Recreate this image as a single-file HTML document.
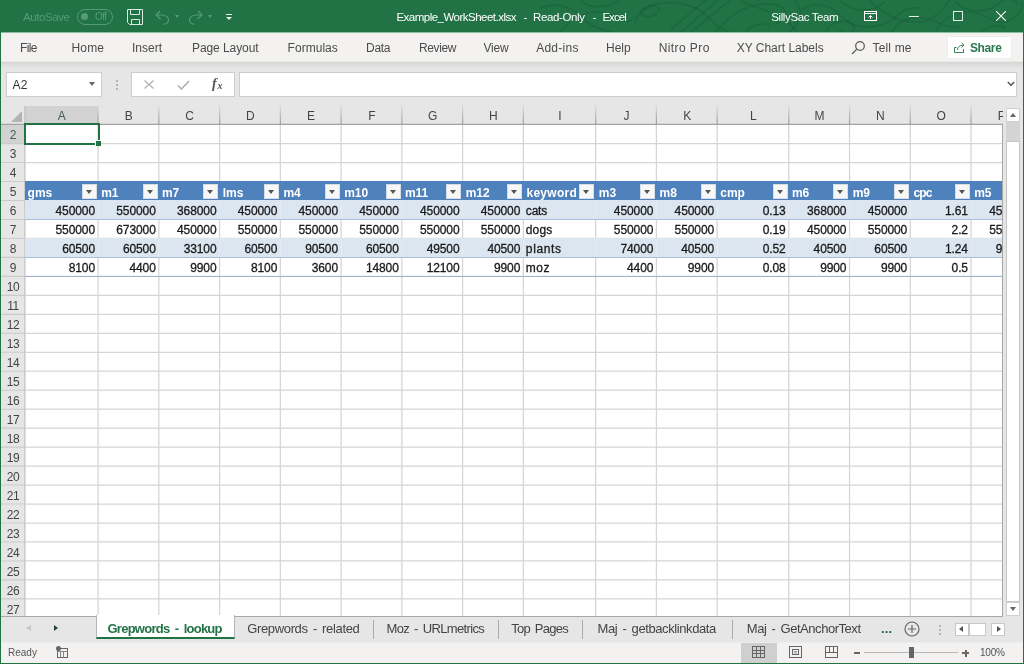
<!DOCTYPE html>
<html><head><meta charset="utf-8"><title>Example_WorkSheet.xlsx - Read-Only - Excel</title>
<style>
html,body{margin:0;padding:0;}
body{width:1024px;height:664px;overflow:hidden;position:relative;background:#e6e6e6;font-family:"Liberation Sans",sans-serif;font-size:12px;color:#444;}
#root{left:0;top:0;width:1024px;height:664px;will-change:transform;}
div,span,svg,i{position:absolute;box-sizing:border-box;white-space:nowrap;}
#title{left:0;top:0;width:1024px;height:32px;background:#217346;}
#tabs{left:1px;top:32px;width:1022px;height:30px;background:#f3f2f1;border-top:1px solid #8fbba2;border-bottom:1px solid #e9e8e7;box-shadow:inset 0 1px 0 #e9f3ec;}
#fbar{left:1px;top:62px;width:1022px;height:44px;background:#e6e6e6;}
.wbox{background:#fff;border:1px solid #cdcdcd;}
#grid{left:1px;top:106px;width:1002px;height:510px;background:#fff;overflow:hidden;}
.vl{width:1px;background:#d9d9d9;}
.hl{height:1px;background:#d9d9d9;}
.fb{width:15px;height:15px;background:#f7f7f7;border:1px solid #d5dde8;}
.fb i{left:3px;top:5px;width:0;height:0;border-left:3.5px solid transparent;border-right:3.5px solid transparent;border-top:4px solid #555;}
#sheets{left:1px;top:616px;width:1022px;height:26px;background:#e6e6e6;}
#status{left:1px;top:642px;width:1022px;height:21px;background:#f3f2f1;}
#frame{left:0;top:0;width:1024px;height:664px;border:1px solid #217346;border-top:none;border-right-width:1.6px;border-bottom-width:1.4px;pointer-events:none;}
</style></head><body><div id="root">

<div id="title">
<span style="left:23.00px;top:9.52px;font-size:11.5px;line-height:14px;color:#569a77;letter-spacing:-0.410px;">AutoSave</span>
<div style="left:77px;top:9px;width:36px;height:16px;border:1px solid #569a77;border-radius:8px;"></div>
<div style="left:81px;top:13px;width:7px;height:7px;border-radius:4px;background:#569a77;"></div>
<span style="left:95.00px;top:10.54px;font-size:10px;line-height:12px;color:#569a77;letter-spacing:-0.577px;">Off</span>
<svg style="left:127px;top:9px" width="16" height="16" viewBox="0 0 16 16" fill="none" stroke="#d8ebe0" stroke-width="1"><path d="M0.5 0.5h15v15h-13l-2-2z"/><path d="M3.5 0.5v5h9v-5"/><path d="M4.5 15.5v-5h8v5"/></svg>
<svg style="left:155px;top:10px" width="15" height="15" viewBox="0 0 15 15" fill="none" stroke="#569a77" stroke-width="1.2"><path d="M5 1 L1 5 L5.5 9"/><path d="M1 5 H7 C11 5 14 7.5 13.5 10.5 C13 13 11 14.2 8.5 14.2"/></svg>
<div style="left:174.5px;top:15px;width:0;height:0;border-left:2.8px solid transparent;border-right:2.8px solid transparent;border-top:3px solid #569a77;"></div>
<svg style="left:188px;top:10px" width="15" height="15" viewBox="0 0 15 15" fill="none" stroke="#569a77" stroke-width="1.2"><path d="M10 1 L14 5 L9.5 9"/><path d="M14 5 H8 C4 5 1 7.5 1.5 10.5 C2 13 4 14.2 6.5 14.2"/></svg>
<div style="left:207.5px;top:15px;width:0;height:0;border-left:2.8px solid transparent;border-right:2.8px solid transparent;border-top:3px solid #569a77;"></div>
<div style="left:225.5px;top:14px;width:6px;height:1px;background:#e8f3ec;"></div>
<div style="left:225.5px;top:16.5px;width:0;height:0;border-left:3px solid transparent;border-right:3px solid transparent;border-top:3.5px solid #e8f3ec;"></div>
<svg style="left:540px;top:0" width="484" height="33" viewBox="0 0 484 33" fill="none" stroke="#124d2c" stroke-opacity="0.26" stroke-width="1.7"><ellipse cx="110" cy="11" rx="9" ry="5" transform="rotate(-15 110 11)"/><path d="M95 22C100 5 125 -2 150 6S170 30 195 33"/><path d="M130 30L168 -2M140 33L180 -2M150 33L190 0"/><path d="M175 33C185 20 200 5 225 4S250 20 235 24"/><path d="M200 0C215 10 230 8 245 20S255 33 262 33"/><path d="M262 10C275 0 290 5 300 15S320 30 340 25S360 5 380 8"/><path d="M330 0C340 12 352 20 372 22S400 12 410 0"/><path d="M395 33C400 20 415 10 432 12S455 28 470 20S480 5 484 2"/><path d="M20 33C30 20 45 10 60 12S80 25 92 20"/><path d="M40 0C50 10 70 8 80 0"/><path d="M285 33C290 22 305 18 312 24S310 36 300 30"/><path d="M300 0C312 14 335 12 345 2"/><path d="M352 33C356 22 370 16 384 18S405 30 420 26"/><path d="M415 2C425 12 445 14 455 6S470 -4 478 4"/><path d="M440 33C446 26 458 24 466 28"/><path d="M0 8C15 2 30 6 40 16S60 30 75 33"/><path d="M205 33C212 24 222 22 230 26"/><path d="M255 0C262 8 262 18 255 26S250 33 252 33"/></svg>
<span style="left:396.40px;top:9.72px;font-size:11.5px;line-height:14px;color:#fff;letter-spacing:-0.510px;">Example_WorkSheet.xlsx</span>
<span style="left:523.50px;top:9.72px;font-size:11.5px;line-height:14px;color:#fff;letter-spacing:0.000px;">-</span>
<span style="left:533.00px;top:9.72px;font-size:11.5px;line-height:14px;color:#fff;letter-spacing:-0.371px;">Read-Only</span>
<span style="left:592.50px;top:9.72px;font-size:11.5px;line-height:14px;color:#fff;letter-spacing:0.000px;">-</span>
<span style="left:602.40px;top:9.72px;font-size:11.5px;line-height:14px;color:#fff;letter-spacing:-0.955px;">Excel</span>
<span style="left:771.20px;top:9.72px;font-size:11.5px;line-height:14px;color:#fff;letter-spacing:-0.376px;">SillySac Team</span>
<svg style="left:864px;top:11px" width="13" height="10" viewBox="0 0 13 10" fill="none" stroke="#fff" stroke-width="1"><rect x="0.5" y="0.5" width="12" height="9"/><path d="M0.5 2.5h12"/><path d="M6.5 8V4.5M4.5 6.5l2-2 2 2"/></svg>
<div style="left:909px;top:16px;width:10px;height:1px;background:#e4f0e9;"></div>
<div style="left:953px;top:11px;width:10px;height:10px;border:1px solid #e4f0e9;"></div>
<svg style="left:996px;top:11px" width="10" height="10" viewBox="0 0 10 10" stroke="#fff" stroke-width="1.1"><path d="M0 0L10 10M10 0L0 10"/></svg>
</div>
<div id="tabs"></div><div id="tabsc" style="left:0;top:0;">
<span style="left:20.00px;top:40.84px;font-size:12px;line-height:14px;color:#4c4c4c;letter-spacing:-0.612px;">File</span>
<span style="left:71.50px;top:40.84px;font-size:12px;line-height:14px;color:#4c4c4c;letter-spacing:0.163px;">Home</span>
<span style="left:132.00px;top:40.84px;font-size:12px;line-height:14px;color:#4c4c4c;letter-spacing:-0.002px;">Insert</span>
<span style="left:192.00px;top:40.84px;font-size:12px;line-height:14px;color:#4c4c4c;letter-spacing:-0.079px;">Page Layout</span>
<span style="left:287.60px;top:40.84px;font-size:12px;line-height:14px;color:#4c4c4c;letter-spacing:0.027px;">Formulas</span>
<span style="left:366.00px;top:40.84px;font-size:12px;line-height:14px;color:#4c4c4c;letter-spacing:-0.283px;">Data</span>
<span style="left:419.00px;top:40.84px;font-size:12px;line-height:14px;color:#4c4c4c;letter-spacing:-0.369px;">Review</span>
<span style="left:483.40px;top:40.84px;font-size:12px;line-height:14px;color:#4c4c4c;letter-spacing:-0.131px;">View</span>
<span style="left:536.20px;top:40.84px;font-size:12px;line-height:14px;color:#4c4c4c;letter-spacing:0.252px;">Add-ins</span>
<span style="left:606.00px;top:40.84px;font-size:12px;line-height:14px;color:#4c4c4c;letter-spacing:0.006px;">Help</span>
<span style="left:658.70px;top:40.84px;font-size:12px;line-height:14px;color:#4c4c4c;letter-spacing:0.419px;">Nitro Pro</span>
<span style="left:736.70px;top:40.84px;font-size:12px;line-height:14px;color:#4c4c4c;letter-spacing:-0.012px;">XY Chart Labels</span>
<span style="left:872.50px;top:40.84px;font-size:12px;line-height:14px;color:#4c4c4c;letter-spacing:0.165px;">Tell me</span>
<svg style="left:851px;top:40px" width="15" height="15" viewBox="0 0 15 15" fill="none" stroke="#555" stroke-width="1.2"><circle cx="9" cy="6" r="4.3"/><path d="M5.8 9.2L1 14"/></svg>
<div style="left:948px;top:37px;width:63px;height:21px;background:#fff;box-shadow:0 0 1px #ddd;"></div>
<svg style="left:954px;top:42px" width="12" height="12" viewBox="0 0 12 12" fill="none" stroke="#3d7d5b" stroke-width="1"><path d="M2.5 5.5H0.5v5h9V7"/><path d="M3.5 8C3.8 5 5.5 3.2 9.5 3.2M7.5 0.8l2.5 2.4-2.5 2.4"/></svg>
<span style="left:970.00px;top:40.84px;font-size:12px;line-height:14px;color:#2a7950;letter-spacing:-0.388px;font-weight:bold;">Share</span>
</div>
<div id="fbar"></div><div style="left:0;top:0;">
<div style="left:1px;top:62px;width:1022px;height:6px;background:linear-gradient(#d5d5d4,#e6e6e6);"></div>
<div class="wbox" style="left:6px;top:72.4px;width:96px;height:24.5px;"></div>
<span style="left:12.50px;top:77.64px;font-size:12px;line-height:14px;color:#333;letter-spacing:0.322px;">A2</span>
<div style="left:89px;top:81.5px;width:0;height:0;border-left:3.5px solid transparent;border-right:3.5px solid transparent;border-top:4px solid #666;"></div>
<div style="left:115.5px;top:80px;width:2px;height:1.6px;background:#b4b4b4;"></div>
<div style="left:115.5px;top:84px;width:2px;height:1.6px;background:#b4b4b4;"></div>
<div style="left:115.5px;top:88px;width:2px;height:1.6px;background:#b4b4b4;"></div>
<div class="wbox" style="left:131px;top:72.4px;width:104px;height:24.5px;"></div>
<svg style="left:144px;top:80px" width="10" height="9" viewBox="0 0 10 9" stroke="#b0b0b0" stroke-width="1.2"><path d="M0.5 0.5L9.5 8.5M9.5 0.5L0.5 8.5"/></svg>
<svg style="left:177px;top:80px" width="13" height="10" viewBox="0 0 13 10" fill="none" stroke="#b0b0b0" stroke-width="1.6"><path d="M1 5.5L4.5 9L12 1"/></svg>
<span style="left:212px;top:76px;font-family:'Liberation Serif',serif;font-style:italic;font-weight:bold;font-size:14px;line-height:16px;color:#555;">f</span>
<span style="left:217.5px;top:80px;font-family:'Liberation Serif',serif;font-style:italic;font-weight:bold;font-size:10px;line-height:12px;color:#555;">x</span>
<div class="wbox" style="left:239px;top:72.4px;width:778px;height:24.5px;"></div>
<svg style="left:1006.5px;top:81px" width="8" height="6" viewBox="0 0 8 6" fill="none" stroke="#606060" stroke-width="1.7"><path d="M0.8 1L4 4.3L7.2 1"/></svg>
</div>
<div id="gridc" style="left:0;top:0;width:1003px;height:616px;overflow:hidden;">
<div style="left:1px;top:106px;width:1002px;height:19px;background:#e6e6e6;"></div>
<div style="left:1px;top:125px;width:24px;height:500px;background:#e6e6e6;"></div>
<div style="left:25px;top:125px;width:980px;height:500px;background:#fff;"></div>
<div style="left:25px;top:106px;width:73px;height:18px;background:#d2d2d2;"></div>
<div style="left:1px;top:125px;width:23px;height:18px;background:#d2d2d2;"></div>
<div style="left:11px;top:111px;width:0;height:0;border-left:11px solid transparent;border-bottom:11px solid #b4b4b4;"></div>
<svg style="left:0;top:0" width="1003" height="616" viewBox="0 0 1003 616" fill="none"><defs><linearGradient id="hg" gradientUnits="userSpaceOnUse" x1="0" y1="104" x2="0" y2="124"><stop offset="0" stop-color="#e2e2e2"/><stop offset="1" stop-color="#9c9c9c"/></linearGradient></defs><path d="M98.10 125V616 M158.85 125V616 M219.60 125V616 M280.35 125V616 M341.10 125V616 M401.85 125V616 M462.60 125V616 M523.35 125V616 M595.65 125V616 M656.40 125V616 M717.15 125V616 M788.80 125V616 M849.55 125V616 M910.30 125V616 M971.05 125V616 M1031.80 125V616 M25.5 143.60H1003 M25.5 162.57H1003 M25.5 181.54H1003 M25.5 200.51H1003 M25.5 219.48H1003 M25.5 238.45H1003 M25.5 257.42H1003 M25.5 276.39H1003 M25.5 295.36H1003 M25.5 314.33H1003 M25.5 333.30H1003 M25.5 352.27H1003 M25.5 371.24H1003 M25.5 390.21H1003 M25.5 409.18H1003 M25.5 428.15H1003 M25.5 447.12H1003 M25.5 466.09H1003 M25.5 485.06H1003 M25.5 504.03H1003 M25.5 523.00H1003 M25.5 541.97H1003 M25.5 560.94H1003 M25.5 579.91H1003 M25.5 598.88H1003 M25.5 617.85H1003" stroke="#d5d5d5" stroke-width="1.25"/><path d="M1 143.60H24.5 M1 162.57H24.5 M1 181.54H24.5 M1 200.51H24.5 M1 219.48H24.5 M1 238.45H24.5 M1 257.42H24.5 M1 276.39H24.5 M1 295.36H24.5 M1 314.33H24.5 M1 333.30H24.5 M1 352.27H24.5 M1 371.24H24.5 M1 390.21H24.5 M1 409.18H24.5 M1 428.15H24.5 M1 447.12H24.5 M1 466.09H24.5 M1 485.06H24.5 M1 504.03H24.5 M1 523.00H24.5 M1 541.97H24.5 M1 560.94H24.5 M1 579.91H24.5 M1 598.88H24.5 M1 617.85H24.5" stroke="#cbcbcb" stroke-width="1.1"/><path d="M98.10 105V124.3 M158.85 105V124.3 M219.60 105V124.3 M280.35 105V124.3 M341.10 105V124.3 M401.85 105V124.3 M462.60 105V124.3 M523.35 105V124.3 M595.65 105V124.3 M656.40 105V124.3 M717.15 105V124.3 M788.80 105V124.3 M849.55 105V124.3 M910.30 105V124.3 M971.05 105V124.3 M1031.80 105V124.3" stroke="url(#hg)" stroke-width="1.2"/><path d="M1 124.35H1003" stroke="#a3a3a3" stroke-width="1.1"/><path d="M24.9 106V616" stroke="#bdbdbd" stroke-width="1.1"/></svg>
<span style="left:57.70px;top:109.14px;font-size:12px;line-height:14px;color:#40614f;letter-spacing:0.000px;">A</span>
<span style="left:124.87px;top:109.14px;font-size:12px;line-height:14px;color:#444;letter-spacing:0.000px;">B</span>
<span style="left:185.29px;top:109.14px;font-size:12px;line-height:14px;color:#444;letter-spacing:0.000px;">C</span>
<span style="left:246.04px;top:109.14px;font-size:12px;line-height:14px;color:#444;letter-spacing:0.000px;">D</span>
<span style="left:307.12px;top:109.14px;font-size:12px;line-height:14px;color:#444;letter-spacing:0.000px;">E</span>
<span style="left:368.21px;top:109.14px;font-size:12px;line-height:14px;color:#444;letter-spacing:0.000px;">F</span>
<span style="left:427.96px;top:109.14px;font-size:12px;line-height:14px;color:#444;letter-spacing:0.000px;">G</span>
<span style="left:489.04px;top:109.14px;font-size:12px;line-height:14px;color:#444;letter-spacing:0.000px;">H</span>
<span style="left:558.23px;top:109.14px;font-size:12px;line-height:14px;color:#444;letter-spacing:0.000px;">I</span>
<span style="left:623.42px;top:109.14px;font-size:12px;line-height:14px;color:#444;letter-spacing:0.000px;">J</span>
<span style="left:683.17px;top:109.14px;font-size:12px;line-height:14px;color:#444;letter-spacing:0.000px;">K</span>
<span style="left:750.04px;top:109.14px;font-size:12px;line-height:14px;color:#444;letter-spacing:0.000px;">L</span>
<span style="left:814.58px;top:109.14px;font-size:12px;line-height:14px;color:#444;letter-spacing:0.000px;">M</span>
<span style="left:875.99px;top:109.14px;font-size:12px;line-height:14px;color:#444;letter-spacing:0.000px;">N</span>
<span style="left:936.41px;top:109.14px;font-size:12px;line-height:14px;color:#444;letter-spacing:0.000px;">O</span>
<span style="left:997.82px;top:109.14px;font-size:12px;line-height:14px;color:#444;letter-spacing:0.000px;">P</span>
<span style="left:9.86px;top:128.37px;font-size:12px;line-height:14px;color:#40614f;letter-spacing:-0.000px;">2</span>
<span style="left:9.86px;top:147.34px;font-size:12px;line-height:14px;color:#444;letter-spacing:-0.000px;">3</span>
<span style="left:9.86px;top:166.31px;font-size:12px;line-height:14px;color:#444;letter-spacing:-0.000px;">4</span>
<span style="left:9.86px;top:185.28px;font-size:12px;line-height:14px;color:#444;letter-spacing:-0.000px;">5</span>
<span style="left:9.86px;top:204.25px;font-size:12px;line-height:14px;color:#444;letter-spacing:-0.000px;">6</span>
<span style="left:9.86px;top:223.22px;font-size:12px;line-height:14px;color:#444;letter-spacing:-0.000px;">7</span>
<span style="left:9.86px;top:242.19px;font-size:12px;line-height:14px;color:#444;letter-spacing:-0.000px;">8</span>
<span style="left:9.86px;top:261.16px;font-size:12px;line-height:14px;color:#444;letter-spacing:-0.000px;">9</span>
<span style="left:6.78px;top:280.13px;font-size:12px;line-height:14px;color:#444;letter-spacing:-0.500px;">10</span>
<span style="left:7.22px;top:299.10px;font-size:12px;line-height:14px;color:#444;letter-spacing:-0.500px;">11</span>
<span style="left:6.78px;top:318.07px;font-size:12px;line-height:14px;color:#444;letter-spacing:-0.500px;">12</span>
<span style="left:6.78px;top:337.04px;font-size:12px;line-height:14px;color:#444;letter-spacing:-0.500px;">13</span>
<span style="left:6.78px;top:356.01px;font-size:12px;line-height:14px;color:#444;letter-spacing:-0.500px;">14</span>
<span style="left:6.78px;top:374.98px;font-size:12px;line-height:14px;color:#444;letter-spacing:-0.500px;">15</span>
<span style="left:6.78px;top:393.95px;font-size:12px;line-height:14px;color:#444;letter-spacing:-0.500px;">16</span>
<span style="left:6.78px;top:412.92px;font-size:12px;line-height:14px;color:#444;letter-spacing:-0.500px;">17</span>
<span style="left:6.78px;top:431.89px;font-size:12px;line-height:14px;color:#444;letter-spacing:-0.500px;">18</span>
<span style="left:6.78px;top:450.86px;font-size:12px;line-height:14px;color:#444;letter-spacing:-0.500px;">19</span>
<span style="left:6.78px;top:469.83px;font-size:12px;line-height:14px;color:#444;letter-spacing:-0.500px;">20</span>
<span style="left:6.78px;top:488.80px;font-size:12px;line-height:14px;color:#444;letter-spacing:-0.500px;">21</span>
<span style="left:6.78px;top:507.77px;font-size:12px;line-height:14px;color:#444;letter-spacing:-0.500px;">22</span>
<span style="left:6.78px;top:526.74px;font-size:12px;line-height:14px;color:#444;letter-spacing:-0.500px;">23</span>
<span style="left:6.78px;top:545.71px;font-size:12px;line-height:14px;color:#444;letter-spacing:-0.500px;">24</span>
<span style="left:6.78px;top:564.68px;font-size:12px;line-height:14px;color:#444;letter-spacing:-0.500px;">25</span>
<span style="left:6.78px;top:583.65px;font-size:12px;line-height:14px;color:#444;letter-spacing:-0.500px;">26</span>
<span style="left:6.78px;top:602.62px;font-size:12px;line-height:14px;color:#444;letter-spacing:-0.500px;">27</span>
<div style="left:25px;top:181.44px;width:980px;height:18.6px;background:#4f81bd;"></div>
<span style="left:27.60px;top:185.88px;font-size:12px;line-height:14px;color:#fff;letter-spacing:-0.000px;font-weight:bold;">gms</span>
<div class="fb" style="left:81.80px;top:184.04px;"><i></i></div>
<span style="left:101.20px;top:185.88px;font-size:12px;line-height:14px;color:#fff;letter-spacing:0.000px;font-weight:bold;">m1</span>
<div class="fb" style="left:142.55px;top:184.04px;"><i></i></div>
<span style="left:161.95px;top:185.88px;font-size:12px;line-height:14px;color:#fff;letter-spacing:0.000px;font-weight:bold;">m7</span>
<div class="fb" style="left:203.30px;top:184.04px;"><i></i></div>
<span style="left:222.70px;top:185.88px;font-size:12px;line-height:14px;color:#fff;letter-spacing:0.000px;font-weight:bold;">lms</span>
<div class="fb" style="left:264.05px;top:184.04px;"><i></i></div>
<span style="left:283.45px;top:185.88px;font-size:12px;line-height:14px;color:#fff;letter-spacing:0.000px;font-weight:bold;">m4</span>
<div class="fb" style="left:324.80px;top:184.04px;"><i></i></div>
<span style="left:344.20px;top:185.88px;font-size:12px;line-height:14px;color:#fff;letter-spacing:-0.000px;font-weight:bold;">m10</span>
<div class="fb" style="left:385.55px;top:184.04px;"><i></i></div>
<span style="left:404.95px;top:185.88px;font-size:12px;line-height:14px;color:#fff;letter-spacing:-0.000px;font-weight:bold;">m11</span>
<div class="fb" style="left:446.30px;top:184.04px;"><i></i></div>
<span style="left:465.70px;top:185.88px;font-size:12px;line-height:14px;color:#fff;letter-spacing:-0.000px;font-weight:bold;">m12</span>
<div class="fb" style="left:507.05px;top:184.04px;"><i></i></div>
<span style="left:526.45px;top:185.88px;font-size:12px;line-height:14px;color:#fff;letter-spacing:0.284px;font-weight:bold;">keyword</span>
<div class="fb" style="left:579.35px;top:184.04px;"><i></i></div>
<span style="left:598.75px;top:185.88px;font-size:12px;line-height:14px;color:#fff;letter-spacing:0.000px;font-weight:bold;">m3</span>
<div class="fb" style="left:640.10px;top:184.04px;"><i></i></div>
<span style="left:659.50px;top:185.88px;font-size:12px;line-height:14px;color:#fff;letter-spacing:0.000px;font-weight:bold;">m8</span>
<div class="fb" style="left:700.85px;top:184.04px;"><i></i></div>
<span style="left:720.25px;top:185.88px;font-size:12px;line-height:14px;color:#fff;letter-spacing:-0.000px;font-weight:bold;">cmp</span>
<div class="fb" style="left:772.50px;top:184.04px;"><i></i></div>
<span style="left:791.90px;top:185.88px;font-size:12px;line-height:14px;color:#fff;letter-spacing:0.000px;font-weight:bold;">m6</span>
<div class="fb" style="left:833.25px;top:184.04px;"><i></i></div>
<span style="left:852.65px;top:185.88px;font-size:12px;line-height:14px;color:#fff;letter-spacing:0.000px;font-weight:bold;">m9</span>
<div class="fb" style="left:894.00px;top:184.04px;"><i></i></div>
<span style="left:913.40px;top:185.88px;font-size:12px;line-height:14px;color:#fff;letter-spacing:-0.827px;font-weight:bold;">cpc</span>
<div class="fb" style="left:954.75px;top:184.04px;"><i></i></div>
<span style="left:974.15px;top:185.88px;font-size:12px;line-height:14px;color:#fff;letter-spacing:0.000px;font-weight:bold;">m5</span>
<div class="fb" style="left:1015.50px;top:184.04px;"><i></i></div>
<div style="left:25px;top:200.01px;width:980px;height:18.97px;background:#dce6f1;"></div>
<div style="left:25px;top:218.98px;width:980px;height:1px;background:#a9bedb;"></div>
<div style="left:97.6px;top:201.01px;width:1px;height:18px;background:#e4ebf4;"></div>
<div style="left:158.35px;top:201.01px;width:1px;height:18px;background:#e4ebf4;"></div>
<div style="left:219.1px;top:201.01px;width:1px;height:18px;background:#e4ebf4;"></div>
<div style="left:279.85px;top:201.01px;width:1px;height:18px;background:#e4ebf4;"></div>
<div style="left:340.6px;top:201.01px;width:1px;height:18px;background:#e4ebf4;"></div>
<div style="left:401.35px;top:201.01px;width:1px;height:18px;background:#e4ebf4;"></div>
<div style="left:462.1px;top:201.01px;width:1px;height:18px;background:#e4ebf4;"></div>
<div style="left:522.85px;top:201.01px;width:1px;height:18px;background:#e4ebf4;"></div>
<div style="left:595.15px;top:201.01px;width:1px;height:18px;background:#e4ebf4;"></div>
<div style="left:655.9px;top:201.01px;width:1px;height:18px;background:#e4ebf4;"></div>
<div style="left:716.65px;top:201.01px;width:1px;height:18px;background:#e4ebf4;"></div>
<div style="left:788.3px;top:201.01px;width:1px;height:18px;background:#e4ebf4;"></div>
<div style="left:849.05px;top:201.01px;width:1px;height:18px;background:#e4ebf4;"></div>
<div style="left:909.8px;top:201.01px;width:1px;height:18px;background:#e4ebf4;"></div>
<div style="left:970.55px;top:201.01px;width:1px;height:18px;background:#e4ebf4;"></div>
<div style="left:1031.3px;top:201.01px;width:1px;height:18px;background:#e4ebf4;"></div>
<span style="left:55.56px;top:204.25px;font-size:12px;line-height:14px;color:#1a1a1a;letter-spacing:-0.100px;-webkit-text-stroke:0.3px #1a1a1a;">450000</span>
<span style="left:116.31px;top:204.25px;font-size:12px;line-height:14px;color:#1a1a1a;letter-spacing:-0.100px;-webkit-text-stroke:0.3px #1a1a1a;">550000</span>
<span style="left:177.06px;top:204.25px;font-size:12px;line-height:14px;color:#1a1a1a;letter-spacing:-0.100px;-webkit-text-stroke:0.3px #1a1a1a;">368000</span>
<span style="left:237.81px;top:204.25px;font-size:12px;line-height:14px;color:#1a1a1a;letter-spacing:-0.100px;-webkit-text-stroke:0.3px #1a1a1a;">450000</span>
<span style="left:298.56px;top:204.25px;font-size:12px;line-height:14px;color:#1a1a1a;letter-spacing:-0.100px;-webkit-text-stroke:0.3px #1a1a1a;">450000</span>
<span style="left:359.31px;top:204.25px;font-size:12px;line-height:14px;color:#1a1a1a;letter-spacing:-0.100px;-webkit-text-stroke:0.3px #1a1a1a;">450000</span>
<span style="left:420.06px;top:204.25px;font-size:12px;line-height:14px;color:#1a1a1a;letter-spacing:-0.100px;-webkit-text-stroke:0.3px #1a1a1a;">450000</span>
<span style="left:480.81px;top:204.25px;font-size:12px;line-height:14px;color:#1a1a1a;letter-spacing:-0.100px;-webkit-text-stroke:0.3px #1a1a1a;">450000</span>
<span style="left:525.85px;top:204.25px;font-size:12px;line-height:14px;color:#1a1a1a;letter-spacing:-0.203px;-webkit-text-stroke:0.3px #1a1a1a;">cats</span>
<span style="left:613.86px;top:204.25px;font-size:12px;line-height:14px;color:#1a1a1a;letter-spacing:-0.100px;-webkit-text-stroke:0.3px #1a1a1a;">450000</span>
<span style="left:674.61px;top:204.25px;font-size:12px;line-height:14px;color:#1a1a1a;letter-spacing:-0.100px;-webkit-text-stroke:0.3px #1a1a1a;">450000</span>
<span style="left:762.74px;top:204.25px;font-size:12px;line-height:14px;color:#1a1a1a;letter-spacing:-0.100px;-webkit-text-stroke:0.3px #1a1a1a;">0.13</span>
<span style="left:807.01px;top:204.25px;font-size:12px;line-height:14px;color:#1a1a1a;letter-spacing:-0.100px;-webkit-text-stroke:0.3px #1a1a1a;">368000</span>
<span style="left:867.76px;top:204.25px;font-size:12px;line-height:14px;color:#1a1a1a;letter-spacing:-0.100px;-webkit-text-stroke:0.3px #1a1a1a;">450000</span>
<span style="left:944.99px;top:204.25px;font-size:12px;line-height:14px;color:#1a1a1a;letter-spacing:-0.100px;-webkit-text-stroke:0.3px #1a1a1a;">1.61</span>
<span style="left:989.26px;top:204.25px;font-size:12px;line-height:14px;color:#1a1a1a;letter-spacing:-0.100px;-webkit-text-stroke:0.3px #1a1a1a;">450000</span>
<div style="left:25px;top:237.95px;width:980px;height:1px;background:#a9bedb;"></div>
<span style="left:55.56px;top:223.22px;font-size:12px;line-height:14px;color:#1a1a1a;letter-spacing:-0.100px;-webkit-text-stroke:0.3px #1a1a1a;">550000</span>
<span style="left:116.31px;top:223.22px;font-size:12px;line-height:14px;color:#1a1a1a;letter-spacing:-0.100px;-webkit-text-stroke:0.3px #1a1a1a;">673000</span>
<span style="left:177.06px;top:223.22px;font-size:12px;line-height:14px;color:#1a1a1a;letter-spacing:-0.100px;-webkit-text-stroke:0.3px #1a1a1a;">450000</span>
<span style="left:237.81px;top:223.22px;font-size:12px;line-height:14px;color:#1a1a1a;letter-spacing:-0.100px;-webkit-text-stroke:0.3px #1a1a1a;">550000</span>
<span style="left:298.56px;top:223.22px;font-size:12px;line-height:14px;color:#1a1a1a;letter-spacing:-0.100px;-webkit-text-stroke:0.3px #1a1a1a;">550000</span>
<span style="left:359.31px;top:223.22px;font-size:12px;line-height:14px;color:#1a1a1a;letter-spacing:-0.100px;-webkit-text-stroke:0.3px #1a1a1a;">550000</span>
<span style="left:420.06px;top:223.22px;font-size:12px;line-height:14px;color:#1a1a1a;letter-spacing:-0.100px;-webkit-text-stroke:0.3px #1a1a1a;">550000</span>
<span style="left:480.81px;top:223.22px;font-size:12px;line-height:14px;color:#1a1a1a;letter-spacing:-0.100px;-webkit-text-stroke:0.3px #1a1a1a;">550000</span>
<span style="left:525.85px;top:223.22px;font-size:12px;line-height:14px;color:#1a1a1a;letter-spacing:0.093px;-webkit-text-stroke:0.3px #1a1a1a;">dogs</span>
<span style="left:613.86px;top:223.22px;font-size:12px;line-height:14px;color:#1a1a1a;letter-spacing:-0.100px;-webkit-text-stroke:0.3px #1a1a1a;">550000</span>
<span style="left:674.61px;top:223.22px;font-size:12px;line-height:14px;color:#1a1a1a;letter-spacing:-0.100px;-webkit-text-stroke:0.3px #1a1a1a;">550000</span>
<span style="left:762.74px;top:223.22px;font-size:12px;line-height:14px;color:#1a1a1a;letter-spacing:-0.100px;-webkit-text-stroke:0.3px #1a1a1a;">0.19</span>
<span style="left:807.01px;top:223.22px;font-size:12px;line-height:14px;color:#1a1a1a;letter-spacing:-0.100px;-webkit-text-stroke:0.3px #1a1a1a;">450000</span>
<span style="left:867.76px;top:223.22px;font-size:12px;line-height:14px;color:#1a1a1a;letter-spacing:-0.100px;-webkit-text-stroke:0.3px #1a1a1a;">550000</span>
<span style="left:951.57px;top:223.22px;font-size:12px;line-height:14px;color:#1a1a1a;letter-spacing:-0.100px;-webkit-text-stroke:0.3px #1a1a1a;">2.2</span>
<span style="left:989.26px;top:223.22px;font-size:12px;line-height:14px;color:#1a1a1a;letter-spacing:-0.100px;-webkit-text-stroke:0.3px #1a1a1a;">550000</span>
<div style="left:25px;top:237.95px;width:980px;height:18.97px;background:#dce6f1;"></div>
<div style="left:25px;top:256.92px;width:980px;height:1px;background:#a9bedb;"></div>
<div style="left:97.6px;top:238.95px;width:1px;height:18px;background:#e4ebf4;"></div>
<div style="left:158.35px;top:238.95px;width:1px;height:18px;background:#e4ebf4;"></div>
<div style="left:219.1px;top:238.95px;width:1px;height:18px;background:#e4ebf4;"></div>
<div style="left:279.85px;top:238.95px;width:1px;height:18px;background:#e4ebf4;"></div>
<div style="left:340.6px;top:238.95px;width:1px;height:18px;background:#e4ebf4;"></div>
<div style="left:401.35px;top:238.95px;width:1px;height:18px;background:#e4ebf4;"></div>
<div style="left:462.1px;top:238.95px;width:1px;height:18px;background:#e4ebf4;"></div>
<div style="left:522.85px;top:238.95px;width:1px;height:18px;background:#e4ebf4;"></div>
<div style="left:595.15px;top:238.95px;width:1px;height:18px;background:#e4ebf4;"></div>
<div style="left:655.9px;top:238.95px;width:1px;height:18px;background:#e4ebf4;"></div>
<div style="left:716.65px;top:238.95px;width:1px;height:18px;background:#e4ebf4;"></div>
<div style="left:788.3px;top:238.95px;width:1px;height:18px;background:#e4ebf4;"></div>
<div style="left:849.05px;top:238.95px;width:1px;height:18px;background:#e4ebf4;"></div>
<div style="left:909.8px;top:238.95px;width:1px;height:18px;background:#e4ebf4;"></div>
<div style="left:970.55px;top:238.95px;width:1px;height:18px;background:#e4ebf4;"></div>
<div style="left:1031.3px;top:238.95px;width:1px;height:18px;background:#e4ebf4;"></div>
<span style="left:62.13px;top:242.19px;font-size:12px;line-height:14px;color:#1a1a1a;letter-spacing:-0.100px;-webkit-text-stroke:0.3px #1a1a1a;">60500</span>
<span style="left:122.88px;top:242.19px;font-size:12px;line-height:14px;color:#1a1a1a;letter-spacing:-0.100px;-webkit-text-stroke:0.3px #1a1a1a;">60500</span>
<span style="left:183.63px;top:242.19px;font-size:12px;line-height:14px;color:#1a1a1a;letter-spacing:-0.100px;-webkit-text-stroke:0.3px #1a1a1a;">33100</span>
<span style="left:244.38px;top:242.19px;font-size:12px;line-height:14px;color:#1a1a1a;letter-spacing:-0.100px;-webkit-text-stroke:0.3px #1a1a1a;">60500</span>
<span style="left:305.13px;top:242.19px;font-size:12px;line-height:14px;color:#1a1a1a;letter-spacing:-0.100px;-webkit-text-stroke:0.3px #1a1a1a;">90500</span>
<span style="left:365.88px;top:242.19px;font-size:12px;line-height:14px;color:#1a1a1a;letter-spacing:-0.100px;-webkit-text-stroke:0.3px #1a1a1a;">60500</span>
<span style="left:426.63px;top:242.19px;font-size:12px;line-height:14px;color:#1a1a1a;letter-spacing:-0.100px;-webkit-text-stroke:0.3px #1a1a1a;">49500</span>
<span style="left:487.38px;top:242.19px;font-size:12px;line-height:14px;color:#1a1a1a;letter-spacing:-0.100px;-webkit-text-stroke:0.3px #1a1a1a;">40500</span>
<span style="left:525.85px;top:242.19px;font-size:12px;line-height:14px;color:#1a1a1a;letter-spacing:0.616px;-webkit-text-stroke:0.3px #1a1a1a;">plants</span>
<span style="left:620.43px;top:242.19px;font-size:12px;line-height:14px;color:#1a1a1a;letter-spacing:-0.100px;-webkit-text-stroke:0.3px #1a1a1a;">74000</span>
<span style="left:681.18px;top:242.19px;font-size:12px;line-height:14px;color:#1a1a1a;letter-spacing:-0.100px;-webkit-text-stroke:0.3px #1a1a1a;">40500</span>
<span style="left:762.74px;top:242.19px;font-size:12px;line-height:14px;color:#1a1a1a;letter-spacing:-0.100px;-webkit-text-stroke:0.3px #1a1a1a;">0.52</span>
<span style="left:813.58px;top:242.19px;font-size:12px;line-height:14px;color:#1a1a1a;letter-spacing:-0.100px;-webkit-text-stroke:0.3px #1a1a1a;">40500</span>
<span style="left:874.33px;top:242.19px;font-size:12px;line-height:14px;color:#1a1a1a;letter-spacing:-0.100px;-webkit-text-stroke:0.3px #1a1a1a;">60500</span>
<span style="left:944.99px;top:242.19px;font-size:12px;line-height:14px;color:#1a1a1a;letter-spacing:-0.100px;-webkit-text-stroke:0.3px #1a1a1a;">1.24</span>
<span style="left:995.83px;top:242.19px;font-size:12px;line-height:14px;color:#1a1a1a;letter-spacing:-0.100px;-webkit-text-stroke:0.3px #1a1a1a;">90500</span>
<div style="left:25px;top:275.89px;width:980px;height:1px;background:#9fb3d0;"></div>
<span style="left:68.70px;top:261.16px;font-size:12px;line-height:14px;color:#1a1a1a;letter-spacing:-0.100px;-webkit-text-stroke:0.3px #1a1a1a;">8100</span>
<span style="left:129.45px;top:261.16px;font-size:12px;line-height:14px;color:#1a1a1a;letter-spacing:-0.100px;-webkit-text-stroke:0.3px #1a1a1a;">4400</span>
<span style="left:190.20px;top:261.16px;font-size:12px;line-height:14px;color:#1a1a1a;letter-spacing:-0.100px;-webkit-text-stroke:0.3px #1a1a1a;">9900</span>
<span style="left:250.95px;top:261.16px;font-size:12px;line-height:14px;color:#1a1a1a;letter-spacing:-0.100px;-webkit-text-stroke:0.3px #1a1a1a;">8100</span>
<span style="left:311.70px;top:261.16px;font-size:12px;line-height:14px;color:#1a1a1a;letter-spacing:-0.100px;-webkit-text-stroke:0.3px #1a1a1a;">3600</span>
<span style="left:365.88px;top:261.16px;font-size:12px;line-height:14px;color:#1a1a1a;letter-spacing:-0.100px;-webkit-text-stroke:0.3px #1a1a1a;">14800</span>
<span style="left:426.63px;top:261.16px;font-size:12px;line-height:14px;color:#1a1a1a;letter-spacing:-0.100px;-webkit-text-stroke:0.3px #1a1a1a;">12100</span>
<span style="left:493.95px;top:261.16px;font-size:12px;line-height:14px;color:#1a1a1a;letter-spacing:-0.100px;-webkit-text-stroke:0.3px #1a1a1a;">9900</span>
<span style="left:525.85px;top:261.16px;font-size:12px;line-height:14px;color:#1a1a1a;letter-spacing:0.465px;-webkit-text-stroke:0.3px #1a1a1a;">moz</span>
<span style="left:627.00px;top:261.16px;font-size:12px;line-height:14px;color:#1a1a1a;letter-spacing:-0.100px;-webkit-text-stroke:0.3px #1a1a1a;">4400</span>
<span style="left:687.75px;top:261.16px;font-size:12px;line-height:14px;color:#1a1a1a;letter-spacing:-0.100px;-webkit-text-stroke:0.3px #1a1a1a;">9900</span>
<span style="left:762.74px;top:261.16px;font-size:12px;line-height:14px;color:#1a1a1a;letter-spacing:-0.100px;-webkit-text-stroke:0.3px #1a1a1a;">0.08</span>
<span style="left:820.15px;top:261.16px;font-size:12px;line-height:14px;color:#1a1a1a;letter-spacing:-0.100px;-webkit-text-stroke:0.3px #1a1a1a;">9900</span>
<span style="left:880.90px;top:261.16px;font-size:12px;line-height:14px;color:#1a1a1a;letter-spacing:-0.100px;-webkit-text-stroke:0.3px #1a1a1a;">9900</span>
<span style="left:951.57px;top:261.16px;font-size:12px;line-height:14px;color:#1a1a1a;letter-spacing:-0.100px;-webkit-text-stroke:0.3px #1a1a1a;">0.5</span>
<span style="left:1002.40px;top:261.16px;font-size:12px;line-height:14px;color:#1a1a1a;letter-spacing:-0.100px;-webkit-text-stroke:0.3px #1a1a1a;">9900</span>
<div style="left:24px;top:123px;width:76px;height:22px;border:2px solid #217346;"></div>
<div style="left:95px;top:140px;width:6px;height:6px;background:#217346;border:1px solid #fff;border-right:none;border-bottom:none;"></div>
</div>
<div style="left:1002px;top:124px;width:1px;height:492px;background:#a8a8a8;"></div>
<div style="left:1003px;top:106px;width:20px;height:510px;background:#e6e6e6;"></div>
<div style="left:1006px;top:108px;width:14px;height:14px;background:#fff;border:1px solid #d0d0d0;"></div>
<div style="left:1009.5px;top:113px;width:0;height:0;border-left:3.5px solid transparent;border-right:3.5px solid transparent;border-bottom:4px solid #666;"></div>
<div style="left:1006px;top:122px;width:14px;height:19px;background:#d4d4d4;"></div>
<div style="left:1006px;top:141px;width:14px;height:461px;background:#fff;border:1px solid #c6c6c6;"></div>
<div style="left:1006px;top:602px;width:14px;height:14px;background:#fff;border:1px solid #d0d0d0;"></div>
<div style="left:1009.5px;top:607px;width:0;height:0;border-left:3.5px solid transparent;border-right:3.5px solid transparent;border-top:4px solid #666;"></div>
<div id="sheets"></div><div style="left:0;top:0;">
<div style="left:1px;top:615.5px;width:1002px;height:1px;background:#a8a8a8;"></div>
<div style="left:26px;top:625px;width:0;height:0;border-top:3.5px solid transparent;border-bottom:3.5px solid transparent;border-right:5px solid #c6c6c6;"></div>
<div style="left:54px;top:625px;width:0;height:0;border-top:3.5px solid transparent;border-bottom:3.5px solid transparent;border-left:4.5px solid #1f4a33;"></div>
<div style="left:96px;top:615px;width:139px;height:24px;background:#fff;border-bottom:2px solid #217346;border-left:1px solid #b5b5b5;border-right:1px solid #b5b5b5;"></div>
<span style="left:107.50px;top:620.50px;font-size:13px;line-height:16px;color:#217346;letter-spacing:-0.752px;font-weight:bold;word-spacing:2.5px;">Grepwords - lookup</span>
<span style="left:247.25px;top:620.50px;font-size:13px;line-height:16px;color:#444;letter-spacing:-0.355px;word-spacing:2px;">Grepwords - related</span>
<span style="left:386.50px;top:620.50px;font-size:13px;line-height:16px;color:#444;letter-spacing:-0.651px;word-spacing:2px;">Moz - URLmetrics</span>
<span style="left:511.25px;top:620.50px;font-size:13px;line-height:16px;color:#444;letter-spacing:-0.742px;word-spacing:2px;">Top Pages</span>
<span style="left:597.50px;top:620.50px;font-size:13px;line-height:16px;color:#444;letter-spacing:-0.405px;word-spacing:2px;">Maj - getbacklinkdata</span>
<span style="left:746.80px;top:620.50px;font-size:13px;line-height:16px;color:#444;letter-spacing:-0.460px;word-spacing:2px;">Maj - GetAnchorText</span>
<div style="left:373px;top:620px;width:1px;height:19px;background:#ababab;"></div>
<div style="left:498px;top:620px;width:1px;height:19px;background:#ababab;"></div>
<div style="left:582px;top:620px;width:1px;height:19px;background:#ababab;"></div>
<div style="left:732px;top:620px;width:1px;height:19px;background:#ababab;"></div>
<span style="left:881.00px;top:620.50px;font-size:13px;line-height:16px;color:#2a5e44;letter-spacing:0.083px;font-weight:bold;">...</span>
<svg style="left:904px;top:621px" width="16" height="16" viewBox="0 0 16 16" fill="none" stroke="#666" stroke-width="1.2"><circle cx="8" cy="8" r="7"/><path d="M8 4v8M4 8h8"/></svg>
<div style="left:938.7px;top:625px;width:2px;height:1.6px;background:#b4b4b4;"></div>
<div style="left:938.7px;top:629px;width:2px;height:1.6px;background:#b4b4b4;"></div>
<div style="left:938.7px;top:633px;width:2px;height:1.6px;background:#b4b4b4;"></div>
<div style="left:955px;top:623px;width:14px;height:13px;background:#fff;border:1px solid #c8c8c8;"></div>
<div style="left:959px;top:626px;width:0;height:0;border-top:3.5px solid transparent;border-bottom:3.5px solid transparent;border-right:4px solid #555;"></div>
<div style="left:969px;top:623px;width:17px;height:13px;background:#fff;border:1px solid #c8c8c8;"></div>
<div style="left:991px;top:623px;width:14px;height:13px;background:#fff;border:1px solid #c8c8c8;"></div>
<div style="left:997px;top:626px;width:0;height:0;border-top:3.5px solid transparent;border-bottom:3.5px solid transparent;border-left:4px solid #555;"></div>
</div>
<div id="status"></div><div style="left:0;top:0;">
<div style="left:1px;top:642px;width:1022px;height:1px;background:#ececec;"></div>
<span style="left:8.10px;top:646.54px;font-size:10px;line-height:12px;color:#555;letter-spacing:-0.027px;">Ready</span>
<svg style="left:56px;top:646px" width="13" height="13" viewBox="0 0 13 13" fill="none" stroke="#666" stroke-width="1"><rect x="1.5" y="2.5" width="10" height="9"/><path d="M1.5 5.5h10M4.5 5.5v6M7.5 5.5v6" stroke="#888"/><circle cx="2.5" cy="2.5" r="2.5" fill="#666" stroke="none"/></svg>
<div style="left:741px;top:643px;width:36px;height:20px;background:#cfcfcf;"></div>
<svg style="left:752px;top:646px" width="13" height="12" viewBox="0 0 13 12" fill="none" stroke="#666" stroke-width="1"><rect x="0.5" y="0.5" width="12" height="11"/><path d="M0.5 4.5h12M0.5 7.5h12M4.5 0.5v11M8.5 0.5v11"/></svg>
<svg style="left:789px;top:646px" width="13" height="12" viewBox="0 0 13 12" fill="none" stroke="#666" stroke-width="1"><rect x="0.5" y="0.5" width="12" height="11"/><rect x="3.5" y="3.5" width="6" height="5"/><path d="M5 5.5h3M5 7h3" stroke="#999"/></svg>
<svg style="left:825px;top:646px" width="13" height="12" viewBox="0 0 13 12" fill="none" stroke="#666" stroke-width="1"><rect x="0.5" y="0.5" width="12" height="11"/><path d="M4.5 0.5v6h4v-6M0.5 6.5h12"/></svg>
<div style="left:854px;top:652px;width:6px;height:2px;background:#666;"></div>
<div style="left:864px;top:652px;width:94px;height:1px;background:#b8b8b8;"></div>
<div style="left:909px;top:646.5px;width:5px;height:11px;background:#666;"></div>
<div style="left:962px;top:652px;width:7px;height:2px;background:#666;"></div><div style="left:964.5px;top:649.5px;width:2px;height:7px;background:#666;"></div>
<span style="left:980.00px;top:646.54px;font-size:10px;line-height:12px;color:#555;letter-spacing:-0.192px;">100%</span>
</div>
<div id="frame"></div>
</div></body></html>
